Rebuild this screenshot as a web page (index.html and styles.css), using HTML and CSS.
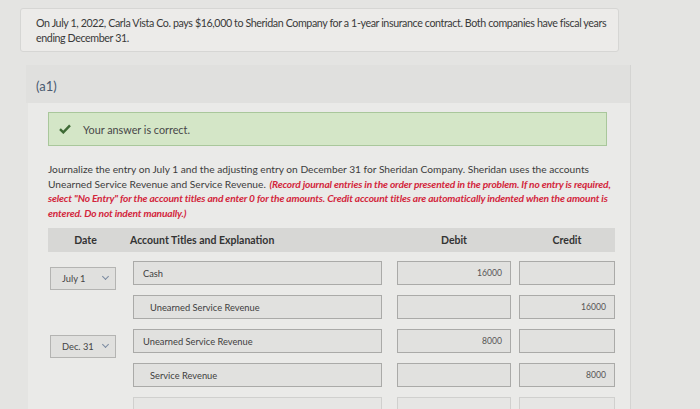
FILE: index.html
```html
<!DOCTYPE html>
<html>
<head>
<meta charset="utf-8">
<link rel="stylesheet" href="styles.css">
</head>
<body>
<div class="page">
  <div class="problem">
    On July 1, 2022, Carla Vista Co. pays $16,000 to Sheridan Company for a 1-year insurance contract. Both companies have fiscal years ending December 31.
  </div>
  <div class="section">
    <div class="section-head">(a1)</div>
    <div class="section-body">
      <div class="correct">
        <svg class="check" viewBox="0 0 12 10" width="12" height="10"><path d="M1 5.2 L4.3 8.4 L11 1.4" fill="none" stroke="#3e6a35" stroke-width="2.4"/></svg>
        <span>Your answer is correct.</span>
      </div>
      <p class="instr">Journalize the entry on July 1 and the adjusting entry on December 31 for Sheridan Company. Sheridan uses the accounts Unearned Service Revenue and Service Revenue. <em>(Record journal entries in the order presented in the problem. If no entry is required, select "No Entry" for the account titles and enter 0 for the amounts. Credit account titles are automatically indented when the amount is entered. Do not indent manually.)</em></p>
      <div class="journal">
        <div class="jhead">
          <div class="c-date hd-date">Date</div>
          <div class="c-acct hd-acct">Account Titles and Explanation</div>
          <div class="c-deb hd-num">Debit</div>
          <div class="c-cred hd-num">Credit</div>
        </div>

        <div class="jrow">
          <div class="c-date"><div class="sel">July 1<span class="chev"></span></div></div>
          <div class="c-acct box">Cash</div>
          <div class="c-deb box num">16000</div>
          <div class="c-cred box num"></div>
        </div>

        <div class="jrow">
          <div class="c-date"></div>
          <div class="c-acct box indent">Unearned Service Revenue</div>
          <div class="c-deb box num"></div>
          <div class="c-cred box num">16000</div>
        </div>

        <div class="jrow">
          <div class="c-date"><div class="sel">Dec. 31<span class="chev"></span></div></div>
          <div class="c-acct box">Unearned Service Revenue</div>
          <div class="c-deb box num">8000</div>
          <div class="c-cred box num"></div>
        </div>

        <div class="jrow">
          <div class="c-date"></div>
          <div class="c-acct box indent">Service Revenue</div>
          <div class="c-deb box num"></div>
          <div class="c-cred box num">8000</div>
        </div>

        <div class="jrow">
          <div class="c-date"></div>
          <div class="c-acct box stub"></div>
          <div class="c-deb box stub"></div>
          <div class="c-cred box stub"></div>
        </div>
      </div>
    </div>
  </div>
</div>
</body>
</html>
```
FILE: styles.css
```css
html, body {
  margin: 0;
  padding: 0;
  background: #e4e4e2;
  font-family: Lato, "Noto Sans", sans-serif;
  color: #3c3c3c;
  height: 409px;
  overflow: hidden;
}
.page {
  width: 610px;
  padding: 8px 0 0 20px;
}
.problem {
  width: 576px;
  background: #ecebe9;
  border: 1px solid #d6d6d4;
  border-radius: 3px;
  padding: 6px 6px 6px 15px;
  font-size: 10.7px;
  letter-spacing: -0.4px;
  line-height: 15px;
  color: #3a3a3a;
}
.section {
  margin-top: 13px;
  margin-left: 6px;
  width: 604px;
  border-right: 1px solid #d4d4d2;
}
.section-head {
  background: #e0e0de;
  padding: 13px 10px 11px 10px;
  font-size: 13px;
  color: #4a5a70;
  height: 14px;
}
.section-body {
  background: #eaeae8;
  margin-left: 2px;
  padding: 9px 0 0 20px;
  height: 320px;
}
.correct {
  width: 557px;
  height: 32px;
  background: #d4e6c7;
  border: 1px solid #a9c79b;
  display: flex;
  align-items: center;
  font-size: 10.8px;
  color: #474747;
}
.check {
  margin: 0 12px 0 10px;
}
.instr {
  margin: 16px 0 0 0;
  width: 570px;
  font-size: 10.2px;
  line-height: 14.5px;
  color: #3c3c3c;
}
.instr em {
  color: #d3263c;
  font-weight: 700;
  font-style: italic;
  letter-spacing: -0.15px;
  padding-left: 1px;
}
.journal {
  margin-top: 8px;
  width: 567px;
  display: flex;
  flex-direction: column;
  gap: 10px;
}
.jhead, .jrow {
  display: flex;
  height: 24px;
}
.jhead {
  background: #d7d7d5;
  font-weight: 700;
  font-size: 10.5px;
  color: #333;
  align-items: center;
  margin-bottom: -1px;
}
.c-date { width: 75px; flex: none; }
.c-acct { width: 249px; flex: none; margin-left: 10px; }
.c-deb { width: 114px; flex: none; margin-left: 15px; }
.c-cred { width: 96px; flex: none; margin-left: 8px; }
.hd-date { text-align: center; }
.hd-acct { margin-left: 7px; width: 252px; }
.hd-num { text-align: center; }
.sel {
  margin: 6px 0 0 2px;
  height: 23px;
  width: 66px;
  background: #e0e0de;
  border: 1px solid #b4b4b2;
  box-sizing: border-box;
  font-size: 9.3px;
  color: #444;
  display: flex;
  align-items: center;
  padding-left: 11px;
  position: relative;
}
.chev {
  position: absolute;
  right: 7px;
  top: 6px;
  width: 4px;
  height: 4px;
  border-right: 1px solid #7a8aa0;
  border-bottom: 1px solid #7a8aa0;
  transform: rotate(45deg);
}
.box {
  background: #e1e1df;
  border: 1px solid #aaaaa8;
  box-sizing: border-box;
  font-size: 9.3px;
  color: #3e3e3e;
  display: flex;
  align-items: center;
  padding-left: 9px;
}
.box.indent { padding-left: 16px; }
.box.num {
  justify-content: flex-end;
  padding-right: 8px;
  padding-left: 0;
  font-size: 8.6px;
  color: #555;
}
.box.stub {
  border-bottom: none;
  background: #e6e6e4;
  border-color: #d0d0ce;
}
```
